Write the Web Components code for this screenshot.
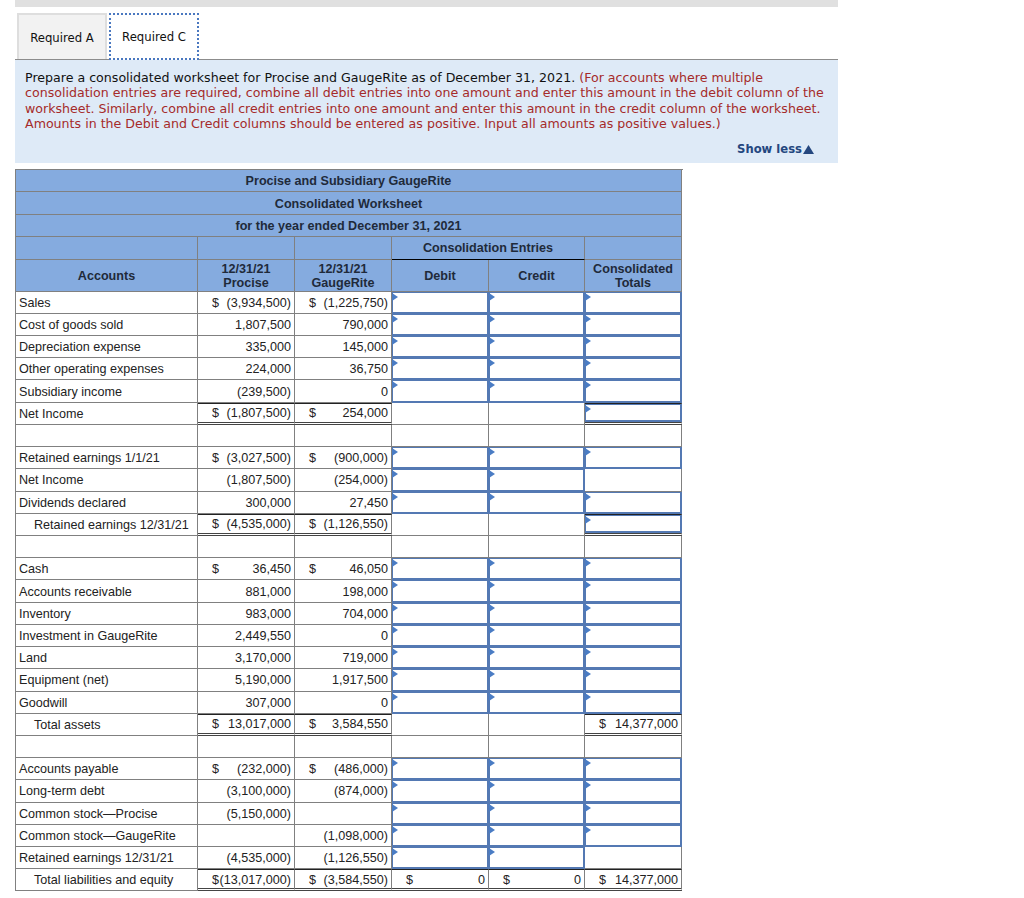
<!DOCTYPE html>
<html>
<head>
<meta charset="utf-8">
<title>Consolidated Worksheet</title>
<style>
  html, body { margin: 0; background: #fff; }
  body { font-family: "DejaVu Sans", Verdana, sans-serif; }
  .page { width: 823px; margin-left: 15px; display: flex; flex-direction: column; }
</style>
</head>
<body>
<div class="page">
  <quiz-topbar></quiz-topbar>
  <quiz-tabs>
    <quiz-tab>Required A</quiz-tab>
    <quiz-tab active>Required C</quiz-tab>
  </quiz-tabs>
  <quiz-prompt>
    Prepare a consolidated worksheet for Procise and GaugeRite as of December 31, 2021.
    <span slot="note">(For accounts where multiple consolidation entries are required, combine all debit entries into one amount and enter this amount in the debit column of the worksheet. Similarly, combine all credit entries into one amount and enter this amount in the credit column of the worksheet. Amounts in the Debit and Credit columns should be entered as positive. Input all amounts as positive values.)</span>
  </quiz-prompt>
  <work-sheet></work-sheet>
</div>

<script>
class QuizTopbar extends HTMLElement {
  constructor() {
    super();
    this.attachShadow({ mode: "open" });
    this.shadowRoot.innerHTML = `
      <style>
        :host { display: block; height: 7px; background: #e0e0e0; }
      </style>
    `;
  }
}

class QuizTabs extends HTMLElement {
  constructor() {
    super();
    this.attachShadow({ mode: "open" });
    this.shadowRoot.innerHTML = `
      <style>
        :host {
          display: flex;
          gap: 2px;
          height: 46px;
          margin-top: 6px;
          padding-left: 2px;
        }
      </style>
      <slot></slot>
    `;
  }
}

class QuizTab extends HTMLElement {
  constructor() {
    super();
    this.attachShadow({ mode: "open" });
    this.shadowRoot.innerHTML = `
      <style>
        :host {
          display: flex;
          align-items: center;
          justify-content: center;
          box-sizing: border-box;
          width: 90px;
          height: 46px;
          padding-top: 2px;
          font-size: 11.7px;
          color: #111;
          background: #f2f2f2;
          border: 2px solid #dedede;
          border-bottom: 0;
        }
        :host([active]) {
          position: relative;
          height: 47px;
          padding-top: 1px;
          background: #fff;
          border: 2px dotted #4a78c0;
        }
      </style>
      <slot></slot>
    `;
  }
}

class QuizPrompt extends HTMLElement {
  constructor() {
    super();
    this.attachShadow({ mode: "open" });
    this.shadowRoot.innerHTML = `
      <style>
        :host {
          display: block;
          box-sizing: border-box;
          height: 104px;
          margin-bottom: 6px;
          padding: 10px 10px 0;
          background: #deeaf7;
          border-top: 1px solid #8c8c8c;
          font-size: 12.62px;
          line-height: 15.4px;
          color: #111;
        }
        .note { color: #a52a2a; }
        .toggle {
          display: flex;
          justify-content: flex-end;
          align-items: center;
          gap: 1px;
          margin-top: 10px;
          padding-right: 14px;
          font-size: 11.6px;
          font-weight: 700;
          color: #24477f;
        }
        .toggle svg { width: 11px; height: 9px; }
      </style>
      <div><slot></slot> <span class="note"><slot name="note"></slot></span></div>
      <div class="toggle">Show less<svg viewBox="0 0 11 9"><path d="M5.5 0 L11 9 L0 9 Z" fill="#24477f"/></svg></div>
    `;
  }
}

class CellInput extends HTMLElement {
  constructor() {
    super();
    this.attachShadow({ mode: "open" });
    this.shadowRoot.innerHTML = `
      <style>
        :host {
          display: block;
          position: absolute;
          inset: 0 -1px -1px 0;
          box-sizing: border-box;
          background: #fff;
          border: solid #5479b3;
          border-width: 1px 2px 2px 1px;
        }
        .flag {
          position: absolute;
          left: -1px;
          top: 0;
          width: 0;
          height: 0;
          border-left: 6px solid #4a7cc4;
          border-top: 4px solid transparent;
          border-bottom: 4px solid transparent;
        }
      </style>
      <span class="flag"></span>
    `;
  }
}

// [label, procise, gaugerite, debit, credit, totals, row kind]
// "i" is an entry box, "$|x" a dollar sign plus a value
const ROWS = [
  ["Sales", "$|(3,934,500)", "$|(1,225,750)", "i", "i", "i"],
  ["Cost of goods sold", "1,807,500", "790,000", "i", "i", "i"],
  ["Depreciation expense", "335,000", "145,000", "i", "i", "i"],
  ["Other operating expenses", "224,000", "36,750", "i", "i", "i"],
  ["Subsidiary income", "(239,500)", "0", "i", "i", "i"],
  ["Net Income", "$|(1,807,500)", "$|254,000", "", "", "i", "total"],
  ["", "", "", "", "", ""],
  ["Retained earnings 1/1/21", "$|(3,027,500)", "$|(900,000)", "i", "i", "i"],
  ["Net Income", "(1,807,500)", "(254,000)", "i", "i", ""],
  ["Dividends declared", "300,000", "27,450", "i", "i", "i"],
  ["Retained earnings 12/31/21", "$|(4,535,000)", "$|(1,126,550)", "", "", "i", "sub"],
  ["", "", "", "", "", ""],
  ["Cash", "$|36,450", "$|46,050", "i", "i", "i"],
  ["Accounts receivable", "881,000", "198,000", "i", "i", "i"],
  ["Inventory", "983,000", "704,000", "i", "i", "i"],
  ["Investment in GaugeRite", "2,449,550", "0", "i", "i", "i"],
  ["Land", "3,170,000", "719,000", "i", "i", "i"],
  ["Equipment (net)", "5,190,000", "1,917,500", "i", "i", "i"],
  ["Goodwill", "307,000", "0", "i", "i", "i"],
  ["Total assets", "$|13,017,000", "$|3,584,550", "", "", "$|14,377,000", "sub"],
  ["", "", "", "", "", ""],
  ["Accounts payable", "$|(232,000)", "$|(486,000)", "i", "i", "i"],
  ["Long-term debt", "(3,100,000)", "(874,000)", "i", "i", "i"],
  ["Common stock—Procise", "(5,150,000)", "", "i", "i", "i"],
  ["Common stock—GaugeRite", "", "(1,098,000)", "i", "i", "i"],
  ["Retained earnings 12/31/21", "(4,535,000)", "(1,126,550)", "i", "i", ""],
  ["Total liabilities and equity", "$|(13,017,000)", "$|(3,584,550)", "$|0", "$|0", "$|14,377,000", "sub"],
];

class WorkSheet extends HTMLElement {
  constructor() {
    super();
    this.attachShadow({ mode: "open" });
  }

  connectedCallback() {
    this.render();
  }

  valueCell(value, total) {
    const cls = total && value ? "cell num total" : "cell num";
    if (value === "i") return `<div class="${cls}"><cell-input></cell-input></div>`;
    if (value.includes("|")) {
      const [sign, amount] = value.split("|");
      return `<div class="${cls} money"><span>${sign}</span><span>${amount}</span></div>`;
    }
    return `<div class="${cls}">${value}</div>`;
  }

  render() {
    const body = ROWS.map((row) => {
      const [label, p, g, d, c, t, kind] = row;
      const indent = kind === "sub" ? " indent" : "";
      return `<div class="cell label${indent}">${label}</div>` +
        [p, g, d, c, t].map((v) => this.valueCell(v, !!kind)).join("");
    }).join("");

    this.shadowRoot.innerHTML = `
      <style>
        :host {
          display: block;
          width: 668px;
          font-family: "Liberation Sans", Arial, sans-serif;
          font-size: 12.6px;
          color: #222;
        }
        .grid {
          display: grid;
          grid-template-columns: 182px 97px 97px 97px 96px 97px;
          grid-template-rows: repeat(4, 22.4px) 32px repeat(27, 22.22px);
          border-top: 1px solid #808080;
          border-left: 1px solid #808080;
          box-sizing: border-box;
        }
        .cell {
          box-sizing: border-box;
          position: relative;
          display: flex;
          align-items: center;
          padding-top: 1px;
          border-right: 1px solid #808080;
          border-bottom: 1px solid #808080;
          background: #fff;
          white-space: nowrap;
          min-width: 0;
        }
        .head {
          background: #85abdf;
          font-weight: 700;
          color: #1f2a3a;
          justify-content: center;
          text-align: center;
          line-height: 14px;
        }
        .wide { grid-column: 1 / -1; }
        .entries { grid-column: span 2; border-bottom-color: #000; }
        .label { padding-left: 3px; }
        .indent { padding-left: 18px; }
        .num { justify-content: flex-end; padding-right: 3px; }
        .money { justify-content: space-between; padding-left: 14px; }
        .total { border-top: 1px solid #222; border-bottom: 3px double #444; }
        .total cell-input { inset: 0 -1px 0 0; }
      </style>
      <div class="grid">
        <div class="cell head wide">Procise and Subsidiary GaugeRite</div>
        <div class="cell head wide">Consolidated Worksheet</div>
        <div class="cell head wide">for the year ended December 31, 2021</div>
        <div class="cell head"></div>
        <div class="cell head"></div>
        <div class="cell head"></div>
        <div class="cell head entries">Consolidation Entries</div>
        <div class="cell head"></div>
        <div class="cell head">Accounts</div>
        <div class="cell head">12/31/21<br>Procise</div>
        <div class="cell head">12/31/21<br>GaugeRite</div>
        <div class="cell head">Debit</div>
        <div class="cell head">Credit</div>
        <div class="cell head">Consolidated<br>Totals</div>
        ${body}
      </div>
    `;
  }
}

customElements.define("quiz-topbar", QuizTopbar);
customElements.define("quiz-tabs", QuizTabs);
customElements.define("quiz-tab", QuizTab);
customElements.define("quiz-prompt", QuizPrompt);
customElements.define("cell-input", CellInput);
customElements.define("work-sheet", WorkSheet);
</script>
</body>
</html>
